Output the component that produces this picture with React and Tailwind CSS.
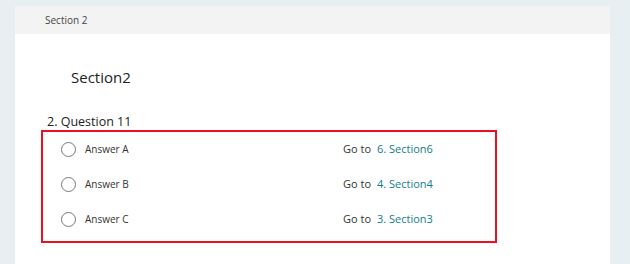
const answers = [
  { label: "Answer A", target: "6. Section6" },
  { label: "Answer B", target: "4. Section4" },
  { label: "Answer C", target: "3. Section3" },
];

export default function App() {
  return (
    <div
      className="h-[264px] w-[630px] overflow-hidden bg-[#e7eff2] pt-[6px] pl-[15px] pr-[20px]"
      style={{ fontFamily: '"Open Sans", "Noto Sans", sans-serif' }}
    >
      <div className="h-[260px] bg-white">
        {/* header strip */}
        <div className="flex h-[28px] items-center bg-[#f3f3f3] pl-[30px] text-[10px] text-[#444]">
          Section 2
        </div>

        <div className="pl-[56px] pt-[32px] text-[15px] leading-[22px] text-[#222]">Section2</div>

        <div className="pl-[32px] pt-[25px] text-[12.5px] leading-[18px] text-[#222]">2. Question 11</div>

        <div className="ml-[26px] mt-[-1px] w-[456px] border-2 border-[#e81123] pb-[4px]">
          {answers.map((a) => (
            <div key={a.label} className="flex h-[35px] items-center">
              <div className="ml-[18px] h-[15px] w-[15px] rounded-full border border-[#777]" />
              <span className="ml-[9px] w-[258px] text-[10px] text-[#333]">{a.label}</span>
              <span className="text-[11px] text-[#333]">Go to</span>
              <span className="ml-[6px] text-[11px] text-[#0f7d8b]">{a.target}</span>
            </div>
          ))}
        </div>
      </div>
    </div>
  );
}
